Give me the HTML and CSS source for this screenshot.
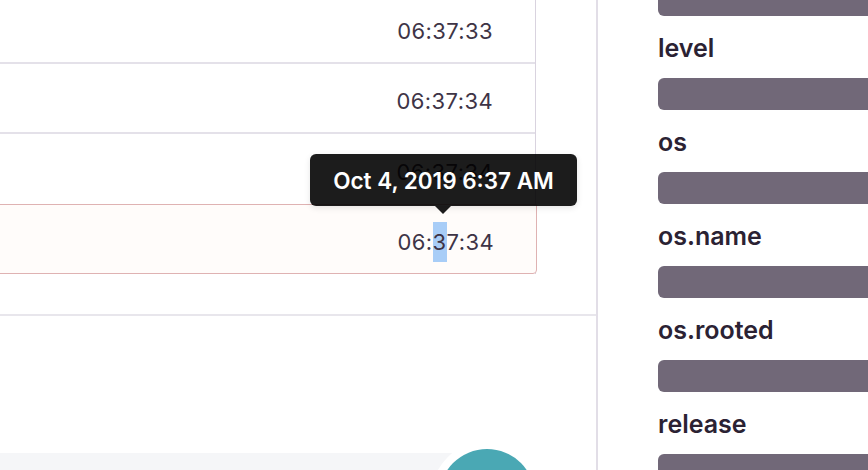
FILE: index.html
```html
<!DOCTYPE html>
<html>
<head>
<meta charset="utf-8">
<link rel="stylesheet" href="styles.css">
</head>
<body>
<div class="page">
  <div class="main">
    <div class="list">
      <div class="row first"><span class="time">06:37:33</span></div>
      <div class="row"><span class="time">06:37:34</span></div>
      <div class="row"><span class="time">06:37:34</span></div>
      <div class="row active"><span class="time">06:<span class="sel">3</span>7:34</span></div>
    </div>
    <div class="divider"></div>
    <div class="footer">
      <div class="input"></div>
      <div class="fab"></div>
    </div>
    <div class="tooltip">Oct 4, 2019 6:37 AM</div>
  </div>
  <div class="side">
    <div class="bar top"></div>
    <div class="label">level</div>
    <div class="bar"></div>
    <div class="label">os</div>
    <div class="bar"></div>
    <div class="label">os.name</div>
    <div class="bar"></div>
    <div class="label">os.rooted</div>
    <div class="bar"></div>
    <div class="label">release</div>
    <div class="bar"></div>
  </div>
</div>
</body>
</html>
```
FILE: styles.css
```css
html, body {
  margin: 0;
  padding: 0;
  background: #ffffff;
  overflow: hidden;
}
body {
  width: 868px;
  height: 470px;
  font-family: Inter, "Noto Sans", sans-serif;
}
.page {
  display: flex;
  width: 868px;
  height: 470px;
  overflow: hidden;
}
.main {
  position: relative;
  width: 596px;
  flex: none;
  border-right: 2px solid #e2dee7;
}
.list {
  width: 535px;
  margin-top: -6px;
  border-right: 1px solid #d9d3df;
}
.row {
  border-bottom: 2px solid #e4e1e9;
  display: flex;
  align-items: center;
  justify-content: flex-end;
  padding-right: 42px;
  padding-top: 6px;
  box-sizing: border-box;
  height: 70px;
}
.row.active {
  background: #fffcfa;
  border: 1px solid #dfb2b2;
  border-radius: 0 0 4px 0;
  width: 539px;
  margin-left: -2px;
  margin-right: -2px;
  height: 70px;
  padding-right: 42px;
}
.list .row:nth-child(3) {
  border-bottom: none;
}
.time {
  font-size: 22px;
  color: #3e3446;
  letter-spacing: 0.4px;
}
.sel {
  display: inline-block;
  background: #a8cdf7;
  padding: 7px 0;
  margin: -7px 0;
}
.divider {
  height: 2px;
  background: #e8e6ec;
  margin-top: 40px;
}
.footer {
  position: relative;
  margin-top: 137px;
}
.input {
  width: 470px;
  height: 20px;
  background: #f5f6f8;
}
.fab {
  position: absolute;
  left: 439px;
  top: -4px;
  width: 96px;
  height: 96px;
  border-radius: 50%;
  background: #4aa8b4;
  box-shadow: 0 0 0 8px #ffffff;
}
.tooltip {
  position: absolute;
  left: 310px;
  top: 154px;
  width: 267px;
  height: 52px;
  box-sizing: border-box;
  background: rgba(0, 0, 0, 0.89);
  color: #ffffff;
  border-radius: 6px;
  font-size: 22.5px;
  font-weight: 600;
  display: flex;
  align-items: center;
  justify-content: center;
  box-shadow: 0 2px 6px rgba(0,0,0,0.1);
}
.tooltip::after {
  content: "";
  position: absolute;
  left: 125px;
  bottom: -8px;
  border-left: 8px solid transparent;
  border-right: 8px solid transparent;
  border-top: 8px solid rgba(0, 0, 0, 0.89);
}
.side {
  flex: 1;
  padding-left: 60px;
  overflow: hidden;
}
.bar {
  height: 32px;
  background: #716878;
  border-radius: 6px;
  margin-right: -20px;
}
.bar.top {
  margin-top: -16px;
}
.label {
  font-size: 25px;
  font-weight: 600;
  color: #2b2233;
  line-height: 30px;
  margin: 17px 0 15px;
}
```
